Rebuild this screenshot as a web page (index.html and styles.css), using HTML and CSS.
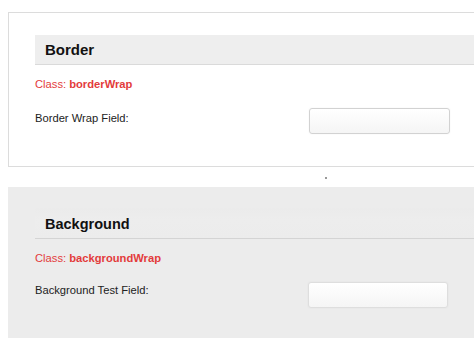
FILE: index.html
```html
<!DOCTYPE html>
<html>
<head>
<meta charset="utf-8">
<link rel="stylesheet" href="styles.css">
</head>
<body>
<div class="page">
  <section class="wrap border-wrap">
    <h2 class="wrap-title">Border</h2>
    <p class="wrap-class">Class: <b>borderWrap</b></p>
    <div class="field">
      <label class="field-label">Border Wrap Field:</label>
      <input class="field-input" type="text">
    </div>
  </section>
  <div class="dot-row"><span class="dot"></span></div>
  <section class="wrap bg-wrap">
    <h2 class="wrap-title">Background</h2>
    <p class="wrap-class">Class: <b>backgroundWrap</b></p>
    <div class="field">
      <label class="field-label">Background Test Field:</label>
      <input class="field-input" type="text">
    </div>
  </section>
</div>
</body>
</html>
```

FILE: styles.css
```css
html, body {
  margin: 0;
  padding: 0;
  background: #fff;
  overflow: hidden;
}
body {
  font-family: "Liberation Sans", Arial, sans-serif;
  color: #222;
}
.page {
  padding: 12px 0 0 8px;
  width: 480px;
}
.wrap {
  box-sizing: border-box;
}
.border-wrap {
  border: 1px solid #dcdcdc;
  height: 155px;
  padding: 22px 0 0 26px;
}
.bg-wrap {
  background: #ececec;
  height: 151px;
  padding: 21px 0 0 27px;
}
.wrap-title {
  margin: 0;
  height: 30px;
  box-sizing: border-box;
  padding: 0 0 0 10px;
  font-size: 15px;
  font-weight: bold;
  line-height: 30px;
  color: #111;
  background: #eeeeee;
  border-bottom: 1px solid #dadada;
}
.bg-wrap .wrap-title {
  height: 31px;
  line-height: 33px;
  font-size: 14.5px;
  background: linear-gradient(#ebebeb, #ededed 40%, #ececec);
  border-bottom: 1px solid #d4d4d4;
}
.wrap-class {
  margin: 12px 0 0 0;
  font-size: 11.2px;
  line-height: 14px;
  color: #e33b3b;
}
.bg-wrap .wrap-class {
  margin-top: 12px;
}
.wrap-class b {
  font-weight: bold;
}
.field {
  display: flex;
  align-items: flex-start;
  margin-top: 17px;
}
.bg-wrap .field {
  margin-top: 17px;
}
.field-label {
  width: 274px;
  font-size: 11.2px;
  line-height: 14px;
  padding-top: 3px;
  color: #222;
}
.bg-wrap .field-label {
  width: 273px;
  padding-top: 1px;
}
.field-input {
  box-sizing: border-box;
  width: 141px;
  height: 26px;
  margin: 0;
  border: 1px solid #d2d2d2;
  border-radius: 3px;
  background: linear-gradient(#ffffff, #f5f5f5);
  box-shadow: 0 0 2px rgba(0,0,0,0.06);
}
.bg-wrap .field-input {
  width: 140px;
  height: 26px;
  border-color: #dedede;
}
.dot-row {
  height: 20px;
  position: relative;
}
.dot {
  position: absolute;
  left: 317px;
  top: 10px;
  width: 2px;
  height: 2px;
  background: #999;
}
```
